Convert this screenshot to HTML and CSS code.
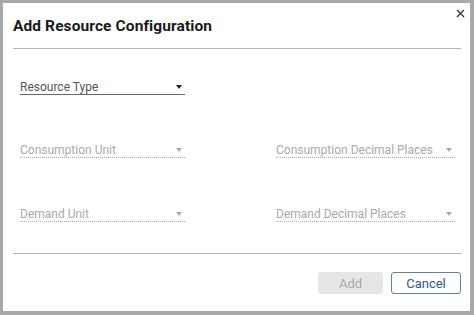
FILE: index.html
```html
<!DOCTYPE html>
<html>
<head>
<meta charset="utf-8">
<link rel="stylesheet" href="styles.css">
</head>
<body>
<div class="dialog">
  <div class="header">
    <h1 class="title">Add Resource Configuration</h1>
    <button class="close" aria-label="Close">
      <svg width="9" height="9" viewBox="0 0 9 9"><path d="M1 1L8 8M8 1L1 8" stroke="#333" stroke-width="1.3"/></svg>
    </button>
  </div>
  <div class="divider"></div>
  <div class="content">
    <div class="row first">
      <div class="field active short">
        <span class="label">Resource Type</span>
        <span class="arrow"></span>
      </div>
    </div>
    <div class="row second">
      <div class="field disabled short">
        <span class="label">Consumption Unit</span>
        <span class="arrow"></span>
      </div>
      <div class="field disabled long">
        <span class="label">Consumption Decimal Places</span>
        <span class="arrow"></span>
      </div>
    </div>
    <div class="row third">
      <div class="field disabled short">
        <span class="label">Demand Unit</span>
        <span class="arrow"></span>
      </div>
      <div class="field disabled long">
        <span class="label">Demand Decimal Places</span>
        <span class="arrow"></span>
      </div>
    </div>
  </div>
  <div class="divider"></div>
  <div class="footer">
    <button class="btn add" disabled>Add</button>
    <button class="btn cancel">Cancel</button>
  </div>
</div>
</body>
</html>
```

FILE: styles.css
```css
html, body {
  margin: 0;
  padding: 0;
}
body {
  background: #a9a9a9;
  width: 474px;
  height: 315px;
  overflow: hidden;
  font-family: Roboto, "Liberation Sans", sans-serif;
}
.dialog {
  position: relative;
  margin: 3px 0 0 3px;
  width: 467px;
  height: 308px;
  background: #fff;
  display: flex;
  flex-direction: column;
}
.header {
  height: 45px;
  display: flex;
  align-items: center;
  padding: 0 10px;
}
.title {
  margin: 0;
  font-size: 15.5px;
  font-weight: bold;
  color: #1a1a1a;
  letter-spacing: 0.1px;
}
.close {
  position: absolute;
  top: 4px;
  right: 4px;
  width: 12px;
  height: 12px;
  padding: 0;
  border: 0;
  background: none;
  display: flex;
  align-items: center;
  justify-content: center;
}
.divider {
  margin: 0 9px 0 10px;
  height: 1px;
  border-top: 1px solid #b4b4b4;
}
.content {
  flex: 1;
  padding: 0 0 0 17px;
  display: flex;
  flex-direction: column;
}
.row {
  display: flex;
  gap: 91px;
}
.row.first {
  margin-top: 29px;
}
.row.second {
  margin-top: 47px;
}
.row.third {
  margin-top: 48px;
}
.field {
  display: flex;
  align-items: center;
  justify-content: space-between;
  height: 15px;
  font-size: 12px;
}
.field.short { width: 165px; }
.field.long { width: 179px; }
.field.active {
  color: #555;
  border-bottom: 1px solid #666;
}
.field.disabled {
  color: #aaa;
  border-bottom: 1px dotted #aaa;
}
.arrow {
  width: 0;
  height: 0;
  border-left: 3.5px solid transparent;
  border-right: 3.5px solid transparent;
  border-top: 4px solid #222;
  margin-right: 3px;
}
.disabled .arrow {
  border-top-color: #aaa;
}
.footer {
  height: 56px;
  display: flex;
  justify-content: flex-end;
  align-items: center;
  gap: 8px;
  padding-right: 9px;
}
.btn {
  height: 22px;
  font-family: Roboto, "Liberation Sans", sans-serif;
  font-size: 13px;
  border-radius: 3px;
  padding: 0;
}
.add {
  width: 65px;
  background: #e6e6e6;
  color: #a8a8a8;
  border: 0;
}
.cancel {
  width: 70px;
  background: #fff;
  color: #2a5a8c;
  border: 1px solid #5d82aa;
}
```
